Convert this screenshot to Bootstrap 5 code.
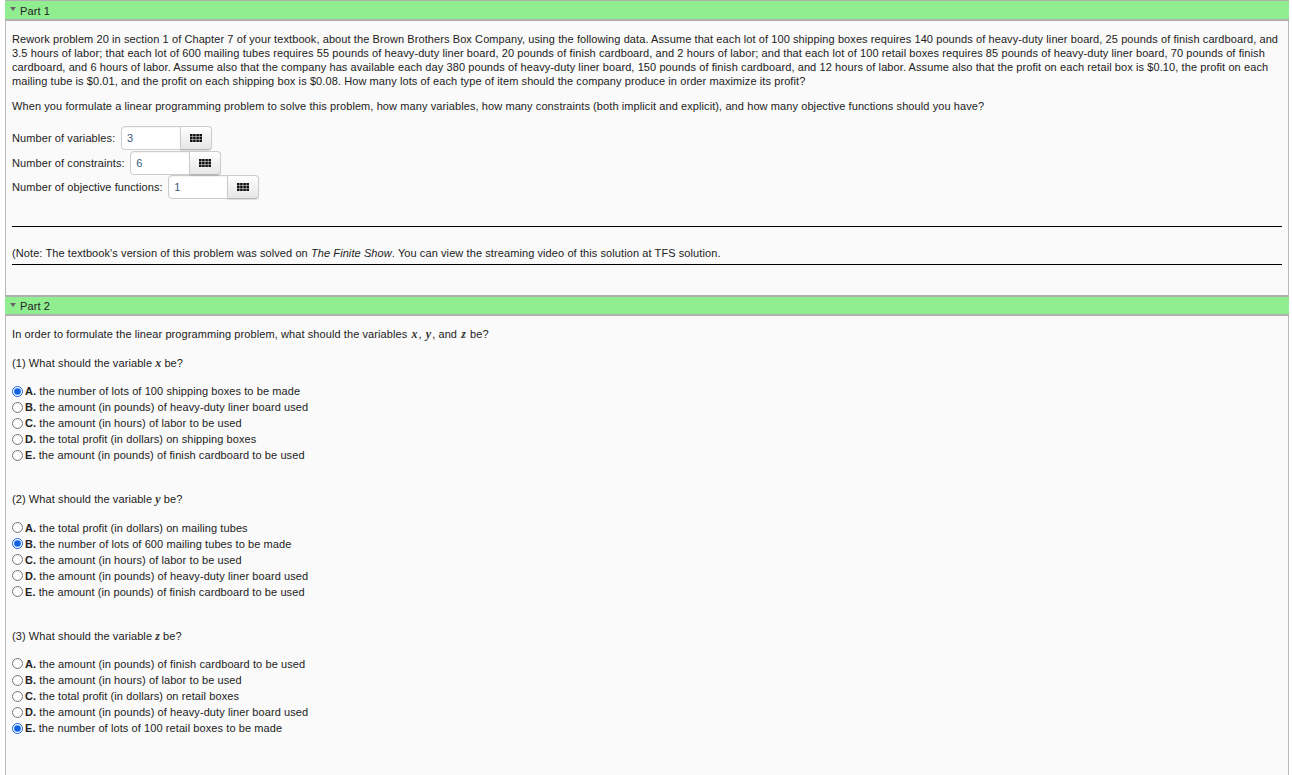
<!DOCTYPE html>
<html lang="en">
<head>
<meta charset="utf-8">
<title>Linear programming problem</title>
<link href="https://cdn.jsdelivr.net/npm/bootstrap@5.3.0/dist/css/bootstrap.min.css" rel="stylesheet">
<style>
html,body{height:775px;overflow:hidden;background:#fff}
body{font-family:"Liberation Sans",Arial,sans-serif;font-size:11px;line-height:14px;color:#222;letter-spacing:.09px}
.part-box{margin:0 3px 0 5px;border:solid #b9b9b9;border-width:0 1px 0 1px;background:#fafafa}
.part-head{margin:0 -1px;background:#90ee90;border-top:2px solid #b0b0b0;border-bottom:2px solid #b0b0b0;padding-left:15px;line-height:19px;position:relative;box-sizing:content-box;height:17px}
.first-box .part-head{border-top-width:1px;height:18px;line-height:20px}
.part-head::before{content:"";position:absolute;left:5px;top:6px;border:3.5px solid transparent;border-top:4px solid #666;border-bottom:0}
.first-box{height:295px}
.second-box{height:490px}
.part-body{padding:11px 6px 0 6px}
.para{margin:0;white-space:nowrap}
.when-line{margin-top:11px}
.ans-list{margin-top:13px}
.ans-row{height:24.5px;display:flex;align-items:center;gap:5.6px}
.ans-group{width:91px;flex-wrap:nowrap}
.ans-group .ans-input{width:60px;height:24px;flex:none;font-size:11px;line-height:14px;padding:3px 5px;color:#3a5a78;border:1px solid #ccc;border-radius:4px 0 0 4px;background:#fff;box-shadow:inset 0 1px 1px rgba(0,0,0,.05);min-height:0}
.pad-btn{width:32px;height:24px;flex:none;padding:0;border:1px solid #ccc;border-bottom-color:#b5b5b5;border-radius:0 4px 4px 0;background:linear-gradient(#fff,#e6e6e6);box-shadow:0 1px 1px rgba(0,0,0,.12);display:flex;align-items:center;justify-content:center;margin-left:-1px}
.rule{border-top:1px solid #000;margin:0;opacity:1;height:0}
.rule-a{margin-top:26px}
.note-line{margin-top:19px}
.rule-b{margin-top:4px}
.opt{height:16.1px;display:flex;align-items:center;line-height:14px}
.opt input{width:11px;height:11px;margin:0 2px 0 0;flex:none;accent-color:#0f62e6}
.tex{font-family:"Liberation Serif",serif;font-style:italic;font-weight:700;font-size:12px;color:#333;letter-spacing:0}
.tex-wide{margin:0 1px}
.q-title{margin-top:15px;margin-bottom:13px}
.q-next{margin-top:29px}
</style>
</head>
<body>
<section class="part-box first-box">
  <div class="part-head">Part 1</div>
  <div class="part-body">
    <p class="para">Rework problem 20 in section 1 of Chapter 7 of your textbook, about the Brown Brothers Box Company, using the following data. Assume that each lot of 100 shipping boxes requires 140 pounds of heavy-duty liner board, 25 pounds of finish cardboard, and<br>3.5 hours of labor; that each lot of 600 mailing tubes requires 55 pounds of heavy-duty liner board, 20 pounds of finish cardboard, and 2 hours of labor; and that each lot of 100 retail boxes requires 85 pounds of heavy-duty liner board, 70 pounds of finish<br>cardboard, and 6 hours of labor. Assume also that the company has available each day 380 pounds of heavy-duty liner board, 150 pounds of finish cardboard, and 12 hours of labor. Assume also that the profit on each retail box is $0.10, the profit on each<br>mailing tube is $0.01, and the profit on each shipping box is $0.08. How many lots of each type of item should the company produce in order maximize its profit?</p>
    <p class="para when-line">When you formulate a linear programming problem to solve this problem, how many variables, how many constraints (both implicit and explicit), and how many objective functions should you have?</p>
    <div class="ans-list">
      <div class="ans-row"><span>Number of variables:</span><div class="input-group ans-group"><input class="form-control ans-input" value="3" aria-label="Number of variables"><button class="btn pad-btn" type="button" aria-label="Keypad"><svg width="12" height="8" viewBox="0 0 12 8"><path fill="#111" d="M0 0h2.6v2.3H0zM3.1 0h2.6v2.3H3.1zM6.3 0h2.6v2.3H6.3zM9.4 0H12v2.3H9.4zM0 2.85h2.6v2.3H0zM3.1 2.85h2.6v2.3H3.1zM6.3 2.85h2.6v2.3H6.3zM9.4 2.85H12v2.3H9.4zM0 5.7h2.6V8H0zM3.1 5.7h2.6V8H3.1zM6.3 5.7h2.6V8H6.3zM9.4 5.7H12V8H9.4z"/></svg></button></div></div>
      <div class="ans-row"><span>Number of constraints:</span><div class="input-group ans-group"><input class="form-control ans-input" value="6" aria-label="Number of constraints"><button class="btn pad-btn" type="button" aria-label="Keypad"><svg width="12" height="8" viewBox="0 0 12 8"><path fill="#111" d="M0 0h2.6v2.3H0zM3.1 0h2.6v2.3H3.1zM6.3 0h2.6v2.3H6.3zM9.4 0H12v2.3H9.4zM0 2.85h2.6v2.3H0zM3.1 2.85h2.6v2.3H3.1zM6.3 2.85h2.6v2.3H6.3zM9.4 2.85H12v2.3H9.4zM0 5.7h2.6V8H0zM3.1 5.7h2.6V8H3.1zM6.3 5.7h2.6V8H6.3zM9.4 5.7H12V8H9.4z"/></svg></button></div></div>
      <div class="ans-row"><span>Number of objective functions:</span><div class="input-group ans-group"><input class="form-control ans-input" value="1" aria-label="Number of objective functions"><button class="btn pad-btn" type="button" aria-label="Keypad"><svg width="12" height="8" viewBox="0 0 12 8"><path fill="#111" d="M0 0h2.6v2.3H0zM3.1 0h2.6v2.3H3.1zM6.3 0h2.6v2.3H6.3zM9.4 0H12v2.3H9.4zM0 2.85h2.6v2.3H0zM3.1 2.85h2.6v2.3H3.1zM6.3 2.85h2.6v2.3H6.3zM9.4 2.85H12v2.3H9.4zM0 5.7h2.6V8H0zM3.1 5.7h2.6V8H3.1zM6.3 5.7h2.6V8H6.3zM9.4 5.7H12V8H9.4z"/></svg></button></div></div>
    </div>
    <div class="rule rule-a"></div>
    <p class="para note-line">(Note: The textbook's version of this problem was solved on <i>The Finite Show</i>. You can view the streaming video of this solution at TFS solution.</p>
    <div class="rule rule-b"></div>
  </div>
</section>
<section class="part-box second-box">
  <div class="part-head">Part 2</div>
  <div class="part-body">
    <p class="para">In order to formulate the linear programming problem, what should the variables <span class="tex tex-wide">x</span>, <span class="tex tex-wide">y</span>, and <span class="tex tex-wide">z</span> be?</p>
    <p class="para q-title">(1) What should the variable <span class="tex">x</span> be?</p>
    <div class="opts">
      <label class="opt"><input type="radio" name="a" checked><span><b>A.</b> the number of lots of 100 shipping boxes to be made</span></label>
      <label class="opt"><input type="radio" name="a"><span><b>B.</b> the amount (in pounds) of heavy-duty liner board used</span></label>
      <label class="opt"><input type="radio" name="a"><span><b>C.</b> the amount (in hours) of labor to be used</span></label>
      <label class="opt"><input type="radio" name="a"><span><b>D.</b> the total profit (in dollars) on shipping boxes</span></label>
      <label class="opt"><input type="radio" name="a"><span><b>E.</b> the amount (in pounds) of finish cardboard to be used</span></label>
    </div>
    <p class="para q-title q-next">(2) What should the variable <span class="tex">y</span> be?</p>
    <div class="opts">
      <label class="opt"><input type="radio" name="b"><span><b>A.</b> the total profit (in dollars) on mailing tubes</span></label>
      <label class="opt"><input type="radio" name="b" checked><span><b>B.</b> the number of lots of 600 mailing tubes to be made</span></label>
      <label class="opt"><input type="radio" name="b"><span><b>C.</b> the amount (in hours) of labor to be used</span></label>
      <label class="opt"><input type="radio" name="b"><span><b>D.</b> the amount (in pounds) of heavy-duty liner board used</span></label>
      <label class="opt"><input type="radio" name="b"><span><b>E.</b> the amount (in pounds) of finish cardboard to be used</span></label>
    </div>
    <p class="para q-title q-next">(3) What should the variable <span class="tex">z</span> be?</p>
    <div class="opts">
      <label class="opt"><input type="radio" name="c"><span><b>A.</b> the amount (in pounds) of finish cardboard to be used</span></label>
      <label class="opt"><input type="radio" name="c"><span><b>B.</b> the amount (in hours) of labor to be used</span></label>
      <label class="opt"><input type="radio" name="c"><span><b>C.</b> the total profit (in dollars) on retail boxes</span></label>
      <label class="opt"><input type="radio" name="c"><span><b>D.</b> the amount (in pounds) of heavy-duty liner board used</span></label>
      <label class="opt"><input type="radio" name="c" checked><span><b>E.</b> the number of lots of 100 retail boxes to be made</span></label>
    </div>
  </div>
</section>
</body>
</html>
